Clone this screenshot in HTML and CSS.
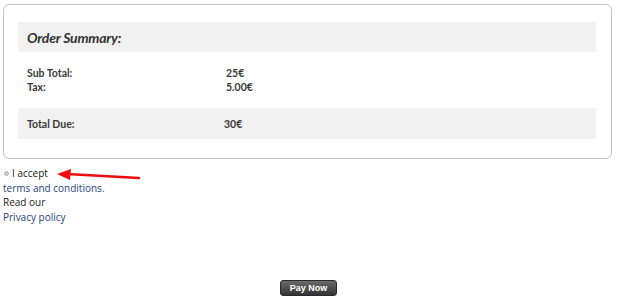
FILE: index.html
```html
<!DOCTYPE html>
<html>
<head>
<meta charset="utf-8">
<link rel="stylesheet" href="styles.css">
</head>
<body>
<div class="card">
  <div class="band head"><h2>Order Summary:</h2></div>
  <div class="rows">
    <div class="row"><span class="label">Sub Total:</span><span>25€</span></div>
    <div class="row"><span class="label">Tax:</span><span>5.00€</span></div>
  </div>
  <div class="band total"><span class="label tl">Total Due:</span><span>30€</span></div>
</div>
<div class="terms">
  <div class="accept"><span class="radio"></span>I accept</div>
  <a class="link" href="#">terms and conditions.</a>
  <div>Read our</div>
  <a class="link" href="#">Privacy policy</a>
</div>
<div class="actions"><button class="pay">Pay Now</button></div>
<svg class="arrow" width="100" height="20" viewBox="0 0 100 20">
  <line x1="12" y1="8" x2="84" y2="12" stroke="#ee0c0c" stroke-width="2.6" stroke-linecap="round"/>
  <polygon points="2,8 16,3 15,14" fill="#ee0c0c"/>
</svg>
</body>
</html>
```
FILE: styles.css
```css
html, body { margin: 0; padding: 0; background: #fff; }
body { padding: 4px 5px 0 3px; font-family: "Open Sans", "Liberation Sans", sans-serif; position: relative; }
.card {
  border: 1px solid #c4c4c4;
  border-radius: 6px;
  padding: 17px 15px 19px 14px;
}
.band { background: #f1f1f1; }
.head { height: 30px; display: flex; align-items: center; padding-left: 9px; }
.head h2 { margin: 0; font-family: Lato, sans-serif; font-style: italic; font-weight: 700; font-size: 14px; color: #333; letter-spacing: -0.2px; }
.rows { padding: 14px 0 14px 9px; }
.row, .total { display: flex; font-family: Lato, sans-serif; font-weight: 700; font-size: 10.5px; color: #3a3a3a; line-height: 14px; }
.label { width: 199px; }
.total { height: 31px; align-items: center; padding-left: 9px; margin-top: 0; }
.tl { width: 197px; }
.terms { margin-top: 7px; font-size: 10px; line-height: 14.5px; color: #222; }
.terms > * { display: block; }
.accept { display: flex; align-items: center; }
.radio { width: 3px; height: 3px; border-radius: 50%; background: #d0d0d0; border: 0.5px solid #b0b0b0; margin: 0 3px 0 1px; }
.link { color: #263f7a; text-decoration: none; }
.actions { display: flex; justify-content: center; margin-top: 56px; padding-left: 2px; }
.pay {
  width: 57px; height: 16px; padding: 0;
  border: 1px solid #2a2a2a; border-radius: 3px;
  background: linear-gradient(#6a6a6a, #333);
  color: #fff; font-family: "Liberation Sans", Arial, sans-serif; font-weight: 700; font-size: 9px;
}
.arrow { position: absolute; left: 55px; top: 166px; }
```
